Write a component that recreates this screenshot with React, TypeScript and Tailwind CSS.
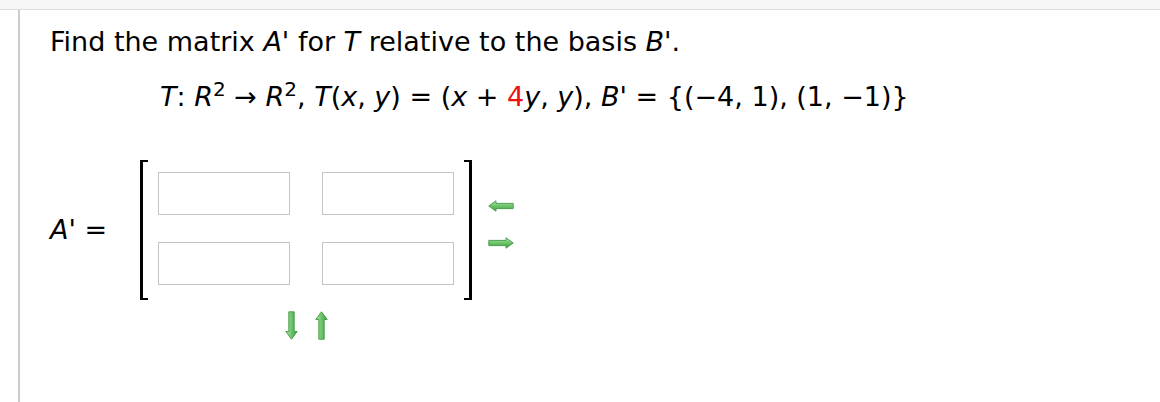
import React from 'react';

function HArrow({ dir }: { dir: 'left' | 'right' }) {
  const flip = dir === 'right';
  return (
    <svg width="26" height="12" viewBox="0 0 26 12" className={flip ? '-scale-x-100' : ''}>
      <defs>
        <linearGradient id={`hg-${dir}`} x1="0" y1="0" x2="0" y2="1">
          <stop offset="0" stopColor="#b6e6b0" />
          <stop offset="0.5" stopColor="#6cc46a" />
          <stop offset="1" stopColor="#3f9d43" />
        </linearGradient>
      </defs>
      <path
        d="M0.8 6 L8 0.8 L8 3.4 L25.2 3.4 L25.2 8.6 L8 8.6 L8 11.2 Z"
        fill={`url(#hg-${dir})`}
        stroke="#3d9a42"
        strokeWidth="0.9"
        strokeLinejoin="round"
      />
    </svg>
  );
}

function VArrow({ dir }: { dir: 'up' | 'down' }) {
  const flip = dir === 'down';
  return (
    <svg width="13" height="29" viewBox="0 0 13 29" className={flip ? '-scale-y-100' : ''}>
      <defs>
        <linearGradient id={`vg-${dir}`} x1="0" y1="0" x2="1" y2="0">
          <stop offset="0" stopColor="#b6e6b0" />
          <stop offset="0.5" stopColor="#6cc46a" />
          <stop offset="1" stopColor="#3f9d43" />
        </linearGradient>
      </defs>
      <path
        d="M6.5 0.8 L12.2 8.5 L9.2 8.5 L9.2 28.2 L3.8 28.2 L3.8 8.5 L0.8 8.5 Z"
        fill={`url(#vg-${dir})`}
        stroke="#3d9a42"
        strokeWidth="0.9"
        strokeLinejoin="round"
      />
    </svg>
  );
}

function Cell() {
  return <input type="text" className="w-[132px] h-[43px] border border-[#c4c4c4] bg-white outline-none" />;
}

export default function App() {
  return (
    <div className="w-[1160px] h-[402px] overflow-hidden bg-white text-black font-['DejaVu_Sans',Verdana,sans-serif]">
      <div className="h-[10px] bg-[#f7f7f7] border-b border-[#dddddd]" />
      <div className="ml-[18px] h-[392px] border-l-2 border-[#cccccc] pl-[30px] pt-[16px]">
        <p className="text-[27px] leading-[32px]">
          Find the matrix <i>A'</i> for <i>T</i> relative to the basis <i>B'</i>.
        </p>

        <p className="mt-[23px] pl-[110px] text-[27px] leading-[32px]">
          <i>T</i>: <i>R</i>
          <sup className="text-[20px]">2</sup> → <i>R</i>
          <sup className="text-[20px]">2</sup>, <i>T</i>(<i>x</i>, <i>y</i>) = (<i>x</i> + <span className="text-[#ee1111]">4</span>
          <i>y</i>, <i>y</i>), <i>B'</i> = {'{'}(−4, 1), (1, −1){'}'}
        </p>

        <div className="mt-[47px] flex items-start">
          <div className="h-[140px] w-[90px] flex items-center text-[27px]">
            <span>
              <i>A'</i> =
            </span>
          </div>

          <div className="flex flex-col items-center">
            <div className="flex">
              <div className="w-[8px] h-[140px] border-y-2 border-l-[3px] border-black" />
              <div className="grid grid-cols-[132px_132px] content-start gap-x-[32px] gap-y-[27px] pl-[10px] pr-[10px] pt-[12px]">
                <Cell />
                <Cell />
                <Cell />
                <Cell />
              </div>
              <div className="w-[8px] h-[140px] border-y-2 border-r-[3px] border-black" />
            </div>
            <div className="mt-[11px] flex gap-[17px]">
              <VArrow dir="down" />
              <VArrow dir="up" />
            </div>
          </div>

          <div className="ml-[16px] mt-[40px] flex flex-col gap-[25px]">
            <HArrow dir="left" />
            <HArrow dir="right" />
          </div>
        </div>
      </div>
    </div>
  );
}
